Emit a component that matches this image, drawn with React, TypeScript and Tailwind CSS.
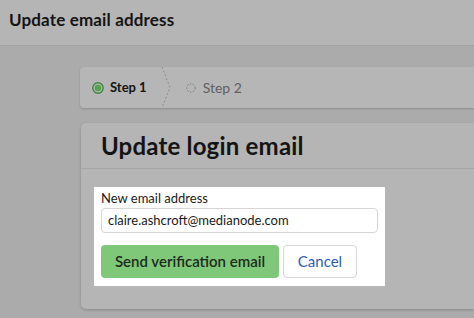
export default function App() {
  return (
    <div className="w-[474px] h-[318px] overflow-hidden bg-[#ababab] font-['Lato',_sans-serif] text-[#141414]">
      {/* Page header */}
      <div className="h-[46px] bg-[#b5b5b5] border-b border-[#a2a2a2] flex items-center px-[9px]">
        <h1 className="text-[17px] font-bold tracking-[0.15px] -mt-[6px]">Update email address</h1>
      </div>

      <div className="pl-[80px] pt-[21px]">
        {/* Steps */}
        <div className="h-[41px] bg-[#b6b6b6] rounded-l-[4px] shadow-[0_1px_2px_rgba(0,0,0,0.18)] flex items-center">
          <div className="flex items-center gap-[6px] pl-[12px] pr-[14px]">
            <svg width="12" height="12" viewBox="0 0 12 12">
              <circle cx="6" cy="6" r="5.2" fill="none" stroke="#3f8a3a" strokeWidth="1.4" />
              <circle cx="6" cy="6" r="3.3" fill="#58a351" />
            </svg>
            <span className="text-[13px] font-bold">Step 1</span>
          </div>
          <svg width="10" height="41" viewBox="0 0 10 41" className="shrink-0">
            <path d="M1 0 L9 20.5 L1 41" fill="none" stroke="#8e8e8e" strokeWidth="1" strokeDasharray="2 2" />
          </svg>
          <div className="flex items-center gap-[7px] pl-[15px]">
            <svg width="10" height="10" viewBox="0 0 10 10">
              <circle cx="5" cy="5" r="4.2" fill="none" stroke="#7a7a7a" strokeWidth="1" strokeDasharray="1.6 1.4" />
            </svg>
            <span className="text-[14px] text-[#5f5f5f]">Step 2</span>
          </div>
        </div>

        {/* Card */}
        <div className="mt-[15px] ml-px h-[186px] bg-[#b5b5b5] rounded-l-[5px] shadow-[0_1px_3px_rgba(0,0,0,0.2)]">
          <div className="h-[46px] border-b border-[#a6a6a6] flex items-center px-[20px]">
            <h2 className="text-[24px] font-bold tracking-[0.2px]">Update login email</h2>
          </div>
          <div className="pt-[18px] pl-[13px]">
            <div className="w-[291px] h-[99px] bg-white px-[7px] pt-[2px]">
              <label className="block text-[13px] leading-[18px] text-[#1a1a1a]">New email address</label>
              <div className="mt-px w-[277px] h-[25px] border border-[#d6d6d6] rounded-[4px] flex items-center px-[6px] text-[13px] text-[#1a1a1a]">
                claire.ashcroft@medianode.com
              </div>
              <div className="mt-[12px] flex gap-[4px]">
                <button className="w-[178px] h-[33px] rounded-[4px] bg-[#80c879] text-[15px] font-semibold text-[#1d2b1c]">
                  Send verification email
                </button>
                <button className="w-[74px] h-[33px] rounded-[4px] border border-[#d6d6d6] bg-white text-[15px] text-[#2d5db3]">
                  Cancel
                </button>
              </div>
            </div>
          </div>
        </div>
      </div>
    </div>
  );
}
